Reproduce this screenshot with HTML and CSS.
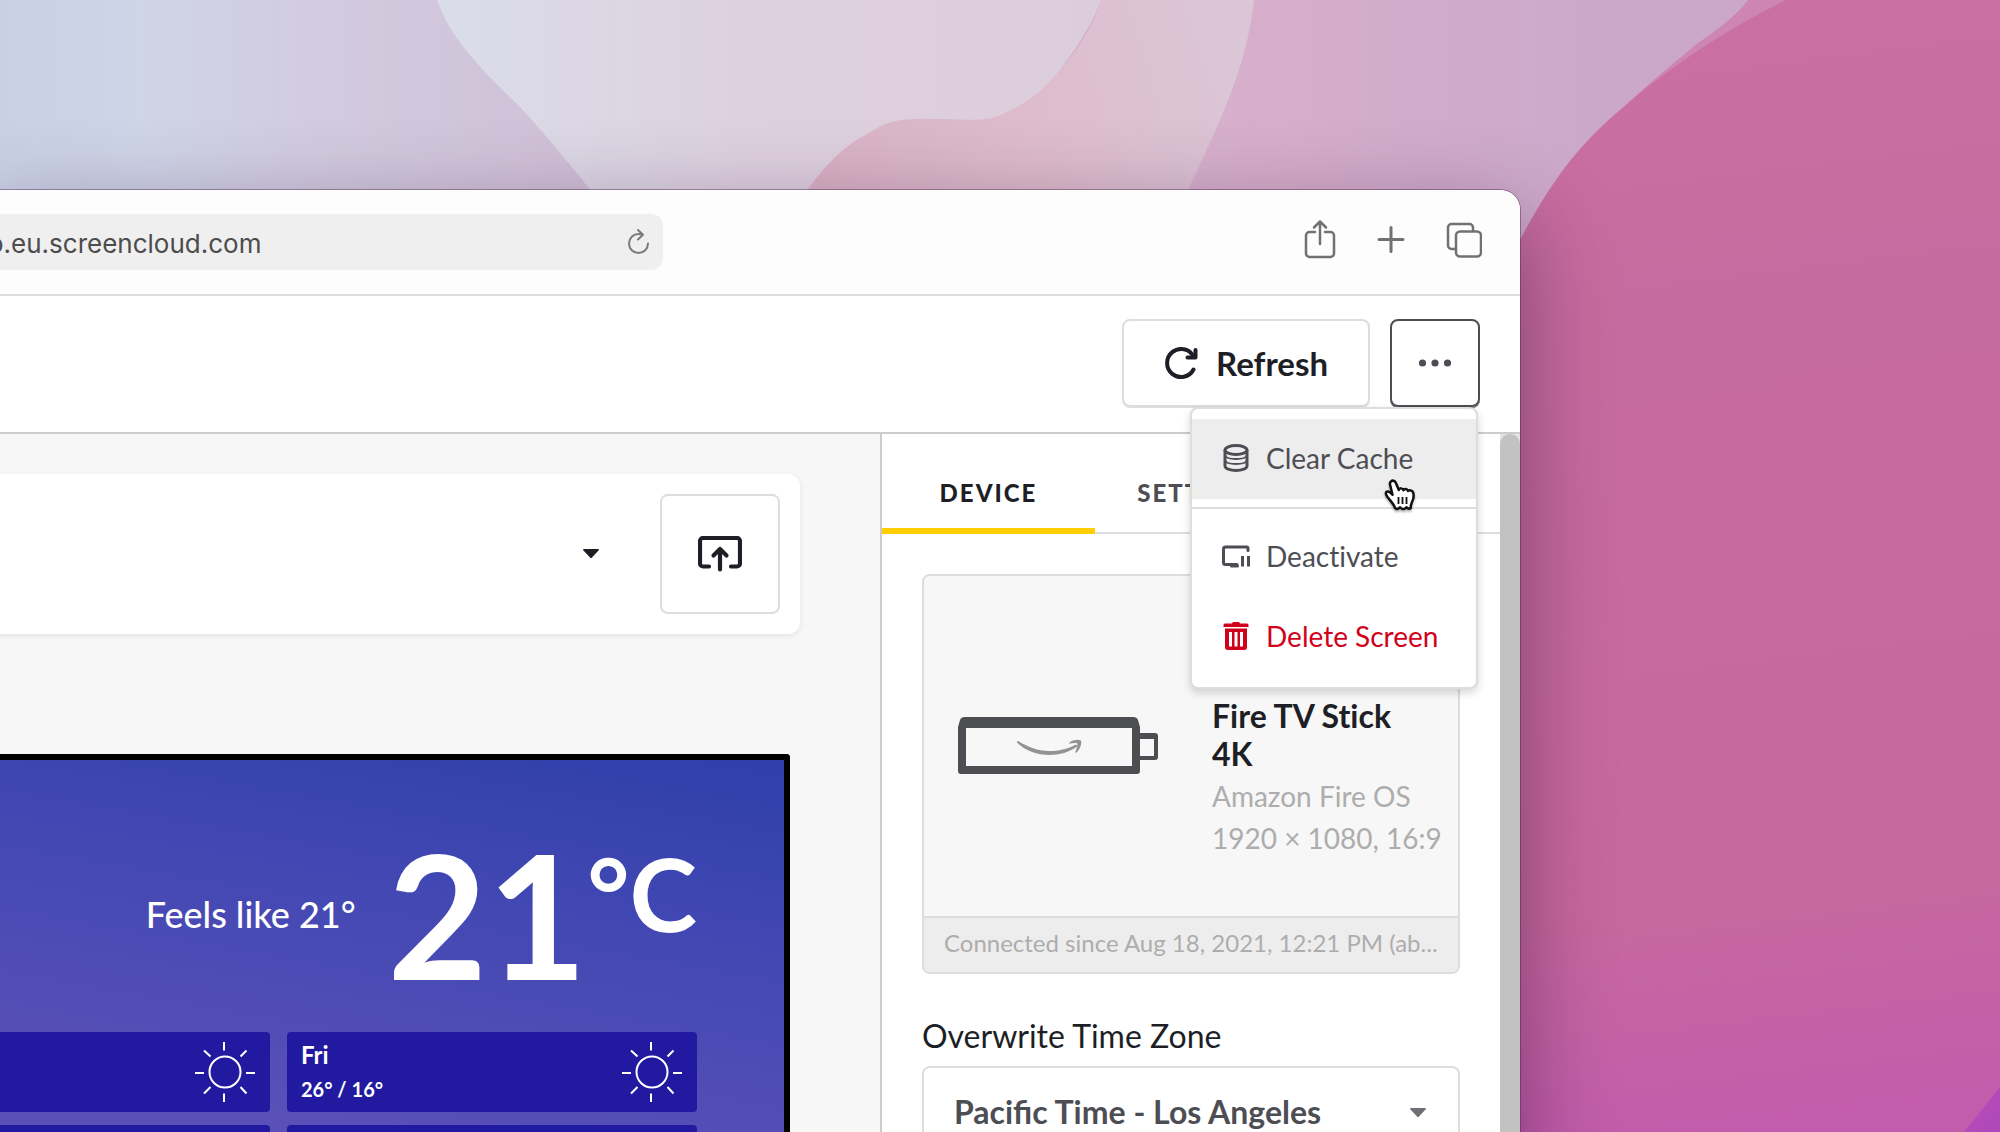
FILE: index.html
```html
<!DOCTYPE html>
<html lang="en">
<head>
    <meta charset="UTF-8">
    <meta name="viewport" content="width=device-width, initial-scale=1.0">
    <title>ScreenCloud - Screen Details</title>
    <link rel="stylesheet" href="styles.css">
</head>
<body>
    <svg class="wallpaper" viewBox="0 0 2000 1132" preserveAspectRatio="none" aria-hidden="true">
        <defs>
            <linearGradient id="sky" gradientUnits="userSpaceOnUse" x1="0" y1="0" x2="2000" y2="0">
                <stop offset="0" stop-color="#c9d0e5"/>
                <stop offset="0.07" stop-color="#cfd4e7"/>
                <stop offset="0.16" stop-color="#d2cbdf"/>
                <stop offset="0.3" stop-color="#d0bfd6"/>
                <stop offset="0.64" stop-color="#d7aecb"/>
                <stop offset="0.8" stop-color="#cba8cb"/>
                <stop offset="1" stop-color="#cba8cb"/>
            </linearGradient>
            <linearGradient id="petal" gradientUnits="userSpaceOnUse" x1="440" y1="0" x2="1100" y2="0">
                <stop offset="0" stop-color="#dadde9"/>
                <stop offset="0.45" stop-color="#ded1df"/>
                <stop offset="1" stop-color="#dccddd"/>
            </linearGradient>
            <linearGradient id="blush" gradientUnits="userSpaceOnUse" x1="830" y1="190" x2="1240" y2="60">
                <stop offset="0" stop-color="#dab2c6"/>
                <stop offset="0.5" stop-color="#debccd"/>
                <stop offset="1" stop-color="#dbc6d7"/>
            </linearGradient>
            <linearGradient id="pink" gradientUnits="userSpaceOnUse" x1="1600" y1="0" x2="1740" y2="1132">
                <stop offset="0" stop-color="#cb70a2"/>
                <stop offset="0.3" stop-color="#c66b9f"/>
                <stop offset="0.8" stop-color="#c7689f"/>
                <stop offset="1" stop-color="#c25cac"/>
            </linearGradient>
            <linearGradient id="violet" x1="0" y1="0" x2="1" y2="1">
                <stop offset="0" stop-color="#b950b6"/>
                <stop offset="1" stop-color="#ae46bb"/>
            </linearGradient>
        </defs>
        <rect width="2000" height="1132" fill="url(#sky)"/>
        <path d="M1101 0H1254C1246 70 1222 120 1164 240H780C830 130 850 119 914 119C960 119 1000 130 1056 75C1078 50 1092 30 1101 0Z" fill="url(#blush)"/>
        <path d="M437 0C450 38 480 68 520 107C550 140 580 176 630 240H775C812 180 832 152 869 133C885 122 900 119 914 119C945 118 970 122 992 118C1030 105 1046 85 1056 75C1075 50 1092 25 1101 0Z" fill="url(#petal)"/>
        <path d="M1748 0C1738 14 1720 28 1698 43C1640 90 1580 140 1520 240L1700 70L1790 0Z" fill="#cc85b5"/>
        <path d="M1786 0C1720 32 1650 80 1600 128C1565 162 1542 198 1520 240C1500 280 1480 340 1470 420V1132H2000V0Z" fill="url(#pink)"/>
        <path d="M1964 1132L2000 1087V1132Z" fill="url(#violet)"/>
    </svg>

    <div class="desktop">
        <div class="window">
            <div class="toolbar">
                <div class="address-bar">
                    <input type="text" class="address" value="o.eu.screencloud.com" aria-label="Address">
                    <button class="reload" aria-label="Reload">
                        <svg width="24" height="28" viewBox="0 0 24 28" fill="none" stroke="#7a7a7a" stroke-width="2" stroke-linecap="round" stroke-linejoin="round">
                            <path d="M21 15.5a9.5 9.5 0 1 1-9.5-9.5c1.500 0 2.500.2 3.500.5"/>
                            <path d="M11 2l5 4.700l-5 4.800"/>
                        </svg>
                    </button>
                </div>
                <div class="toolbar-actions">
                    <button class="toolbar-button" aria-label="Share">
                        <svg width="36" height="40" viewBox="0 0 36 40" fill="none" stroke="#717171" stroke-width="2.500" stroke-linecap="round" stroke-linejoin="round">
                            <path d="M13 13H7.500a3.500 3.500 0 0 0-3.500 3.500v18a3.500 3.500 0 0 0 3.500 3.500h21a3.500 3.500 0 0 0 3.500-3.500v-18a3.500 3.500 0 0 0-3.500-3.500H23"/>
                            <path d="M18 25V3M12 8.500l6-6l6 6"/>
                        </svg>
                    </button>
                    <button class="toolbar-button" aria-label="New tab">
                        <svg width="36" height="40" viewBox="0 0 36 40" fill="none" stroke="#717171" stroke-width="3" stroke-linecap="round">
                            <path d="M17 8.500v24M5 20.500h24"/>
                        </svg>
                    </button>
                    <button class="toolbar-button" aria-label="Show tabs">
                        <svg width="36" height="40" viewBox="0 0 36 40" fill="none" stroke="#717171" stroke-width="2.500" stroke-linejoin="round">
                            <rect x="10" y="12.500" width="25" height="25" rx="4"/>
                            <path d="M10 30H5.500a3.500 3.500 0 0 1-3.500-3.500V8.500A3.500 3.500 0 0 1 5.500 5h18A3.500 3.500 0 0 1 27 8.500V12"/>
                        </svg>
                    </button>
                </div>
            </div>

            <div class="page-header">
                <div class="header-actions">
                    <button class="btn btn-refresh">
                        <svg width="34" height="34" viewBox="0 0 34 34" fill="none" stroke="#1e1f26" stroke-width="4" stroke-linecap="round" stroke-linejoin="round">
                            <path d="M29.500 23.500A14 14 0 1 1 29.500 10.500"/>
                            <path d="M31.500 4v7.500H23.500"/>
                        </svg>
                        Refresh
                    </button>
                    <button class="btn btn-more" aria-label="More actions">
                        <svg width="34" height="8" viewBox="0 0 34 8" fill="#4d4e54">
                            <circle cx="4.500" cy="4" r="3.600"/>
                            <circle cx="17" cy="4" r="3.600"/>
                            <circle cx="29.500" cy="4" r="3.600"/>
                        </svg>
                    </button>

                    <div class="menu">
                        <button class="menu-item hovered">
                            <svg width="28" height="28" viewBox="0 0 28 28" fill="none" stroke="#4d4e54" stroke-width="3">
                                <ellipse cx="14" cy="6" rx="11" ry="4.500"/>
                                <path d="M3 6v16c0 2.500 5 4.500 11 4.500s11-2 11-4.500V6"/>
                                <path d="M3 11.500c1 2.500 6 3.500 11 3.500s10-1 11-3.500M3 16.500c1 2.500 6 3.500 11 3.500s10-1 11-3.500" stroke-width="2"/>
                            </svg>
                            Clear Cache
                        </button>
                        <hr class="menu-divider">
                        <button class="menu-item">
                            <svg width="28" height="28" viewBox="0 0 28 28" fill="none" stroke="#4d4e54" stroke-width="3" stroke-linecap="round" stroke-linejoin="round">
                                <path d="M26 8.500V6.500a1.500 1.500 0 0 0-1.500-1.500H3.500a2 2 0 0 0-2 2v13.500a2 2 0 0 0 2 2H15"/>
                                <path d="M9.500 24h6"/>
                                <path d="M20.500 14v10.500M26.500 14v10.500" stroke-linecap="butt"/>
                            </svg>
                            Deactivate
                        </button>
                        <button class="menu-item danger">
                            <svg width="28" height="28" viewBox="0 0 28 28" fill="#d0021b">
                                <path d="M10 1.500Q10 0 11.500 0h5Q18 0 18 1.500h7q1.500 0 1.500 1.500v2H1.500V3q0-1.500 1.500-1.500z"/>
                                <path fill-rule="evenodd" d="M3 6.500h22V25q0 3-3 3H6q-3 0-3-3zM7 10v14.500h3V10zM12.500 10v14.500h3V10zM18 10v14.500h3V10z"/>
                            </svg>
                            Delete Screen
                        </button>
                        <svg class="pointer" width="32" height="36" viewBox="0 0 32 36" aria-hidden="true">
                            <path d="M7 3.500c1.500-1.500 4-1 4.800 1.200l3 7.300c.6-2.200 3.800-2.200 4.700.2c1-1.800 3.800-1.500 4.500.8c1.200-1.300 4.500-.8 5.200 1.700c.8 3 .3 6.500-1.200 9.300c-1 2-1.300 3.500-1.300 6c-1 1-3.200.8-4.200-.7c-2 2-4.500 2.500-6.500 0c-1 1.200-3 2.200-5 .7c-.5-3-4-6.500-7.500-11c-1.700-2.300-2.200-4.500-.8-5.300c2-1 4 .8 5.800 3L6 6.500C5.700 5.200 6 4.200 7 3.500z" fill="#fff" stroke="#111" stroke-width="2.500" stroke-linejoin="round"/>
                            <path d="M14.500 19v7M18.500 19v7M22.500 19v7" stroke="#111" stroke-width="1.800"/>
                        </svg>
                    </div>
                </div>
            </div>

            <div class="page-body">
                <main class="preview-pane">
                    <div class="content-card">
                        <button class="caret-button" aria-label="Choose content">
                            <svg width="16" height="10" viewBox="0 0 16 10" fill="#1e1f26"><path d="M1 0h14q1 0 1 1L9 8.500q-1 1-2 0L0 1q0-1 1-1z"/></svg>
                        </button>
                        <button class="cast-button" aria-label="Set content">
                            <svg width="44" height="36" viewBox="0 0 44 36" fill="none" stroke="#1e1f26" stroke-width="4.200" stroke-linecap="round" stroke-linejoin="round">
                                <path d="M11 30.500H5a3 3 0 0 1-3-3V5a3 3 0 0 1 3-3h34a3 3 0 0 1 3 3v22.500a3 3 0 0 1-3 3H33"/>
                                <path d="M22 33.500V13.500M15.500 19.500l6.500-6.500l6.500 6.500"/>
                            </svg>
                        </button>
                    </div>

                    <section class="tv">
                        <div class="weather-now">
                            <span class="feels-like">Feels like 21°</span>
                            <span class="temperature">21</span>
                            <span class="unit">°C</span>
                        </div>
                        <div class="forecast">
                            <div class="day">
                                <div></div>
                                <svg class="sun" width="62" height="62" viewBox="0 0 62 62"><use href="#sun"/></svg>
                            </div>
                            <div class="day">
                                <div>
                                    <p class="day-name">Fri</p>
                                    <p class="day-range">26° / 16°</p>
                                </div>
                                <svg class="sun" width="62" height="62" viewBox="0 0 62 62">
                                    <g id="sun">
                                        <circle cx="31" cy="31" r="15.500"/>
                                        <path d="M30 1v8.500M30 52.500V61M1 32h9M52 32h9M10 9.500l6.500 6M52.500 9.500l-6 6M10 52.500l6.500-6.500M52.500 52.500l-6-6.500"/>
                                    </g>
                                </svg>
                            </div>
                            <div class="day"></div>
                            <div class="day"></div>
                        </div>
                    </section>
                </main>

                <aside class="side-panel">
                    <nav class="tabs">
                        <button class="tab active">DEVICE</button>
                        <button class="tab">SETTINGS</button>
                    </nav>

                    <div class="panel-content">
                        <section class="device-card">
                            <div class="device-body">
                                <svg class="device-image" width="200" height="58" viewBox="0 0 200 58" aria-hidden="true">
                                    <path fill="#4d4e51" fill-rule="evenodd" d="M7 0h168q4 0 5 3l2 7v44q0 3-3 3H3q-3 0-3-3V10L2 3q1-3 5-3zM8 11v38h166V11z"/>
                                    <path fill="#4d4e51" fill-rule="evenodd" d="M182 16h15q3 0 3 3v21q0 3-3 3h-15v-4h14V22h-14z"/>
                                    <path fill="#939393" d="M60 24c10 6 20 10 31 10c10 0 18-2 26-6c2-1 3 .5 1.500 2c-7 5-17 8-27 8c-12 0-24-4-32-12c-1-1-.5-2.500.5-2z"/>
                                    <path fill="#939393" d="M111 26c3-3 9-4 12-2.500c1 3-1 9-4.500 12c-1 .5-1.500 0-1-1c1-3 2.500-6.500 1.800-8c-1.300-1-5-.3-7.500 0c-1 0-1.500 0-.8-.5z"/>
                                </svg>
                                <div class="device-info">
                                    <h2 class="device-name">Fire TV Stick 4K</h2>
                                    <p>Amazon Fire OS</p>
                                    <p>1920 × 1080, 16:9</p>
                                </div>
                            </div>
                            <p class="device-status">Connected since Aug 18, 2021, 12:21 PM (ab...</p>
                        </section>

                        <label class="field-label" for="timezone">Overwrite Time Zone</label>
                        <div class="select-wrap">
                            <select id="timezone">
                                <option>Pacific Time - Los Angeles</option>
                            </select>
                            <svg class="select-arrow" width="16" height="10" viewBox="0 0 16 10" fill="#6f7075"><path d="M1 0h14q1 0 1 1L9 8.500q-1 1-2 0L0 1q0-1 1-1z"/></svg>
                        </div>
                    </div>
                </aside>

                <div class="scrollbar"><div class="scroll-thumb"></div></div>
            </div>
        </div>
    </div>
</body>
</html>
```

FILE: styles.css
```css
* {
    margin: 0;
    padding: 0;
    box-sizing: border-box;
}

body {
    height: 100vh;
    overflow: hidden;
    font-family: Lato, "Liberation Sans", sans-serif;
    font-size: 28px;
    font-variant-ligatures: none;
    color: #1e1f26;
}

button, input, select {
    font: inherit;
    color: inherit;
    background: none;
    border: none;
}

button {
    display: flex;
    align-items: center;
    justify-content: center;
    cursor: pointer;
}

svg {
    flex: none;
    display: block;
}

/* Desktop background */
.wallpaper {
    position: absolute;
    width: 100%;
    height: 100%;
}

.desktop {
    position: relative;
    height: 100vh;
    padding: 190px 24% 0 0;
    overflow: hidden;
}

/* Browser window */
.window {
    display: flex;
    flex-direction: column;
    height: 110%;
    background: #fff;
    border-radius: 0 20px 0 0;
    box-shadow: 0 0 0 1px rgba(70, 30, 70, 0.4), 0 30px 90px rgba(40, 10, 50, 0.45);
}

.toolbar {
    display: flex;
    align-items: center;
    justify-content: space-between;
    height: 106px;
    padding-right: 38px;
    background: #fdfdfd;
    border-bottom: 2px solid #dcdcdc;
    border-radius: 0 20px 0 0;
}

.address-bar {
    display: flex;
    align-items: center;
    width: 675px;
    height: 56px;
    margin-left: -12px;
    padding-right: 12px;
    background: #efefef;
    border-radius: 12px;
}

.address {
    flex: 1;
    padding-top: 2px;
    font-family: Inter, "Liberation Sans", sans-serif;
    font-size: 26px;
    color: #4c4c4c;
}

.toolbar-actions {
    display: flex;
    gap: 36px;
    padding-bottom: 6px;
}

/* App header */
.page-header {
    display: flex;
    justify-content: flex-end;
    height: 138px;
    padding: 23px 40px;
    border-bottom: 2px solid #ccc;
}

.header-actions {
    position: relative;
    display: flex;
    gap: 20px;
    height: 88px;
}

.btn {
    border: 2px solid #ddd;
    border-radius: 8px;
    box-shadow: 0 1px 0 #ddd;
}

.btn-refresh {
    gap: 18px;
    padding: 0 40px;
    font-size: 33px;
    font-weight: 700;
}

.btn-more {
    width: 90px;
    border-color: #4d4e54;
    box-shadow: 0 1px 0 #4d4e54;
}

.menu {
    position: absolute;
    top: 100%;
    right: 2px;
    z-index: 1;
    width: 288px;
    padding: 10px 0;
    background: #fff;
    border: 2px solid #ddd;
    border-radius: 8px;
    box-shadow: 0 4px 8px rgba(0, 0, 0, 0.16);
}

.menu-item {
    justify-content: flex-start;
    gap: 16px;
    width: 100%;
    height: 80px;
    padding: 0 0 2px 30px;
    color: #4d4e54;
}

.menu-item.hovered {
    background: #ededed;
}

.menu-item.danger {
    color: #d0021b;
}

.menu-divider {
    margin: 8px 0;
    border: none;
    border-top: 2px solid #ddd;
}

.pointer {
    position: absolute;
    top: 69px;
    right: 60px;
    filter: drop-shadow(0 2px 1px rgba(0, 0, 0, 0.3));
}

/* Page body */
.page-body {
    display: flex;
    flex: 1;
}

.preview-pane {
    flex: 1;
    display: flex;
    flex-direction: column;
    background: #f7f7f7;
}

.content-card {
    display: flex;
    align-items: center;
    justify-content: flex-end;
    gap: 40px;
    margin: 40px 80px 120px -12px;
    padding: 20px;
    background: #fff;
    border-radius: 12px;
    box-shadow: 0 2px 6px rgba(0, 0, 0, 0.08);
}

.caret-button {
    width: 58px;
    height: 60px;
}

.cast-button {
    width: 120px;
    height: 120px;
    border: 2px solid #ddd;
    border-radius: 8px;
}

.tv {
    flex: 1;
    margin-right: 90px;
    padding: 68px 87px 0 0;
    color: #fff;
    background: linear-gradient(190deg, #2e3fab, #4348b3 33%, #5a50b8 75%);
    border: solid #000;
    border-width: 6px 6px 0 0;
    border-radius: 0 4px 0 0;
}

.weather-now {
    display: flex;
    align-items: center;
    justify-content: flex-end;
    margin-bottom: 32px;
    line-height: 1;
    font-weight: 700;
}

.feels-like {
    margin-right: 32px;
    font-size: 36px;
    font-weight: 500;
}

.temperature {
    font-size: 172px;
}

.unit {
    align-self: flex-start;
    margin-top: 14px;
    font-size: 102px;
}

.forecast {
    display: grid;
    grid-template-columns: 1fr 410px;
    gap: 13px 17px;
}

.day {
    display: flex;
    align-items: center;
    justify-content: space-between;
    height: 80px;
    padding: 0 14px;
    background: #211aa0;
    border-radius: 4px;
    font-weight: 700;
}

.day:nth-child(odd) {
    border-radius: 0 4px 4px 0;
}

.day-name {
    font-size: 24px;
    line-height: 34px;
}

.day-range {
    font-size: 20px;
    line-height: 34px;
}

.sun {
    fill: none;
    stroke: #fff;
    stroke-width: 2;
}

/* Side panel */
.side-panel {
    width: 620px;
    background: #fff;
    border-left: 2px solid #ccc;
}

.tabs {
    display: flex;
    height: 100px;
    border-bottom: 2px solid #ddd;
}

.tab {
    width: 213px;
    height: 100px;
    padding-top: 22px;
    font-size: 24px;
    font-weight: 900;
    letter-spacing: 2px;
    color: #4d4e54;
    border-bottom: 6px solid transparent;
}

.tab.active {
    color: #1e1f26;
    border-color: #ffce00;
}

.panel-content {
    padding: 40px;
}

.device-card {
    margin-bottom: 40px;
    border: 2px solid #ddd;
    border-radius: 8px;
    overflow: hidden;
}

.device-body {
    display: flex;
    align-items: center;
    gap: 54px;
    height: 340px;
    padding: 0 8px 0 34px;
    background: #f7f7f7;
}

.device-info {
    padding-top: 64px;
    line-height: 42px;
    color: #adadad;
}

.device-name {
    max-width: 200px;
    margin-bottom: 2px;
    font-size: 32px;
    line-height: 38px;
    color: #1e1f26;
}

.device-status {
    padding: 0 20px 4px;
    font-size: 24px;
    line-height: 50px;
    white-space: nowrap;
    color: #adadad;
    background: #ededed;
    border-top: 2px solid #ddd;
}

.field-label {
    display: block;
    margin-bottom: 8px;
    font-size: 32px;
    line-height: 44px;
}

.select-wrap {
    position: relative;
}

.select-wrap select {
    appearance: none;
    width: 100%;
    height: 92px;
    padding: 0 30px 2px;
    font-size: 32px;
    font-weight: 700;
    font-variant-ligatures: normal;
    color: #4d4e54;
    border: 2px solid #ddd;
    border-radius: 8px;
}

.select-arrow {
    position: absolute;
    top: 42px;
    right: 34px;
    pointer-events: none;
}

.scrollbar {
    width: 20px;
    background: #e4e4e4;
}

.scroll-thumb {
    height: 100%;
    background: #c2c2c2;
    border-radius: 10px;
}
```
